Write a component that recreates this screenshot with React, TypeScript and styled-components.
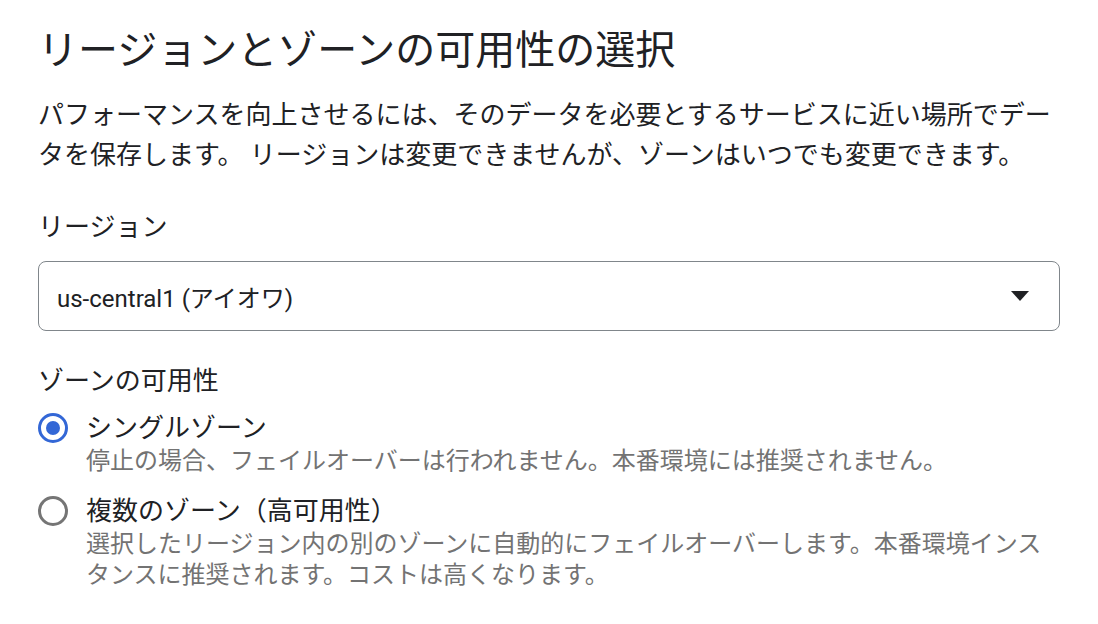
import styled, { createGlobalStyle } from "styled-components";

const GlobalStyle = createGlobalStyle`
  html, body {
    margin: 0;
    padding: 0;
    background: #ffffff;
  }
  body {
    font-family: Roboto, "Noto Sans CJK JP", sans-serif;
    color: #202124;
  }
`;

const Page = styled.div`
  width: 1022px;
  padding: 27px 0 0 38px;
`;

const Title = styled.h1`
  margin: 0;
  font-size: 40px;
  line-height: 48px;
  font-weight: 400;
  color: #202124;
`;

const Intro = styled.p`
  margin: 20px 0 0;
  font-size: 26px;
  line-height: 40px;
  color: #202124;
`;

const FieldLabel = styled.div<{ $gap: number }>`
  margin-top: ${(p) => p.$gap}px;
  font-size: 26px;
  line-height: 36px;
  color: #202124;
`;

const Select = styled.div`
  margin-top: 16px;
  box-sizing: border-box;
  height: 70px;
  border: 1.5px solid #80868b;
  border-radius: 8px;
  display: flex;
  align-items: center;
  justify-content: space-between;
  padding: 0 30px 0 18px;
  font-size: 24px;
  color: #202124;
`;

const Caret = styled.span`
  width: 0;
  height: 0;
  border-left: 9px solid transparent;
  border-right: 9px solid transparent;
  border-top: 10px solid #202124;
`;

const Options = styled.div`
  margin-top: 11px;
  display: flex;
  flex-direction: column;
  gap: 16px;
`;

const Option = styled.div`
  display: grid;
  grid-template-columns: 30px 1fr;
  column-gap: 18px;
`;

const Radio = styled.span<{ $checked?: boolean }>`
  box-sizing: border-box;
  width: 30px;
  height: 30px;
  margin-top: 3px;
  border-radius: 50%;
  border: 3.5px solid ${(p) => (p.$checked ? "#3367d6" : "#757575")};
  display: flex;
  align-items: center;
  justify-content: center;

  &::after {
    content: "";
    display: ${(p) => (p.$checked ? "block" : "none")};
    width: 14px;
    height: 14px;
    border-radius: 50%;
    background: #3367d6;
  }
`;

const OptionText = styled.div`
  display: flex;
  flex-direction: column;
`;

const OptionLabel = styled.div`
  font-size: 26px;
  line-height: 36px;
  color: #202124;
`;

const OptionDesc = styled.div`
  font-size: 24px;
  line-height: 31px;
  color: #737373;
`;

const options = [
  {
    label: "シングルゾーン",
    desc: "停止の場合、フェイルオーバーは行われません。本番環境には推奨されません。",
    checked: true,
  },
  {
    label: "複数のゾーン（高可用性）",
    desc: "選択したリージョン内の別のゾーンに自動的にフェイルオーバーします。本番環境インスタンスに推奨されます。コストは高くなります。",
    checked: false,
  },
];

const App = () => {
  return (
    <>
      <GlobalStyle />
      <Page>
        <Title>リージョンとゾーンの可用性の選択</Title>
        <Intro>
          パフォーマンスを向上させるには、そのデータを必要とするサービスに近い場所でデー
          <br />
          タを保存します。 リージョンは変更できませんが、ゾーンはいつでも変更できます。
        </Intro>
        <FieldLabel $gap={34}>リージョン</FieldLabel>
        <Select>
          <span>us-central1 (アイオワ)</span>
          <Caret />
        </Select>
        <FieldLabel $gap={32}>ゾーンの可用性</FieldLabel>
        <Options>
          {options.map((o) => (
            <Option key={o.label}>
              <Radio $checked={o.checked} />
              <OptionText>
                <OptionLabel>{o.label}</OptionLabel>
                <OptionDesc>{o.desc}</OptionDesc>
              </OptionText>
            </Option>
          ))}
        </Options>
      </Page>
    </>
  );
};

export default App;
